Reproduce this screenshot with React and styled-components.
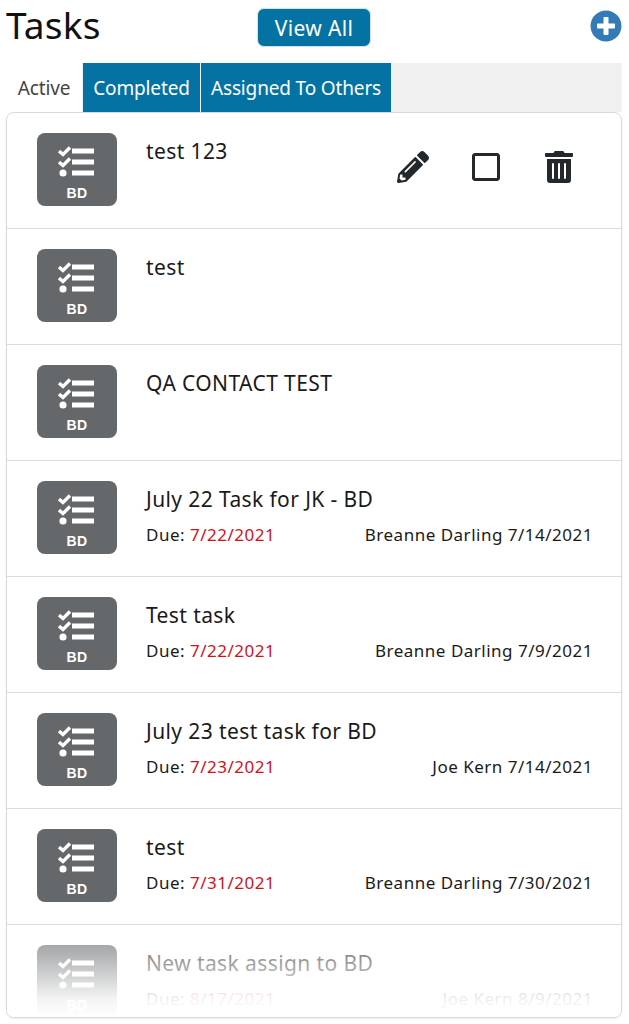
import React from "react";
import styled, { createGlobalStyle } from "styled-components";
import { FaPencilAlt, FaRegSquare, FaTrashAlt, FaPlusCircle } from "react-icons/fa";

const GlobalStyle = createGlobalStyle`
  html, body {
    margin: 0;
    padding: 0;
    background: #fff;
    font-family: "Noto Sans", "Open Sans", sans-serif;
    color: #1a1a1a;
  }
  * { box-sizing: border-box; }
`;

const Page = styled.div`
  width: 629px;
  height: 1024px;
  overflow: hidden;
  padding: 0 7px 0 6px;
`;

const Header = styled.div`
  height: 63px;
  display: grid;
  grid-template-columns: 251px 114px 1fr;
  align-items: start;
`;

const Title = styled.h1`
  margin: 1px 0 0;
  font-size: 37px;
  font-weight: 400;
  line-height: 48px;
  letter-spacing: 0.2px;
  color: #111;
`;

const ViewAll = styled.button`
  margin-top: 8px;
  height: 39px;
  width: 114px;
  border: 1px solid #cfe3ec;
  border-radius: 7px;
  background: #0473a3;
  color: #fff;
  font: 400 21px "Noto Sans", sans-serif;
  letter-spacing: 0.35px;
  padding: 0;
`;

const AddIcon = styled(FaPlusCircle)`
  justify-self: end;
  margin-top: 10px;
  font-size: 32px;
  color: #337ab7;
`;

const Tabs = styled.div`
  display: flex;
  height: 49px;
  background: #f0f0f0;
`;

const Tab = styled.div`
  display: flex;
  align-items: center;
  justify-content: center;
  width: ${(p) => p.$w}px;
  font-size: 19px;
  letter-spacing: -0.15px;
  margin-right: 1px;
  background: ${(p) => (p.$active ? "#fff" : "#0473a3")};
  color: ${(p) => (p.$active ? "#444" : "#fff")};
`;

const Card = styled.div`
  position: relative;
  height: 906px;
  border: 1px solid #d9d9d9;
  border-radius: 8px;
  box-shadow: 0 1px 2px rgba(0, 0, 0, 0.08);
  overflow: hidden;
`;

const Row = styled.div`
  height: 116px;
  padding: 20px 28px 0 30px;
  display: grid;
  grid-template-columns: 80px 1fr;
  column-gap: 29px;
  border-bottom: 1px solid #dcdcdc;
`;

const Badge = styled.div`
  width: 80px;
  height: 73px;
  border-radius: 8px;
  background: #65686b;
  display: flex;
  flex-direction: column;
  align-items: center;
  padding-top: 13px;
  color: #fff;
`;

const ChecklistSvg = styled.svg`
  flex: none;
  margin-right: 2px;
`;

const Initials = styled.div`
  margin-top: 7px;
  font: 700 14px/18px "Liberation Sans", Arial, sans-serif;
  letter-spacing: 0.3px;
`;

const Body = styled.div`
  min-width: 0;
  position: relative;
`;

const Name = styled.div`
  margin-top: 3px;
  font-size: 21px;
  line-height: 30px;
  letter-spacing: 0.4px;
  color: #1a1a1a;
`;

const Meta = styled.div`
  margin-top: 9px;
  display: flex;
  justify-content: space-between;
  font-size: 17px;
  line-height: 24px;
  letter-spacing: 0.5px;
  color: #1a1a1a;
`;

const DueDate = styled.span`
  color: #d0121b;
`;

const Actions = styled.div`
  position: absolute;
  top: 18px;
  right: 18px;
  display: flex;
  gap: 41px;
  align-items: center;
  font-size: 32px;
  color: #23282d;
`;

const Fade = styled.div`
  position: absolute;
  left: 0;
  right: 0;
  bottom: 0;
  height: 88px;
  background: linear-gradient(
    rgba(255, 255, 255, 0.3),
    rgba(255, 255, 255, 0.5) 30%,
    rgba(255, 255, 255, 0.93) 80%,
    #fff
  );
  pointer-events: none;
`;

const ChecklistIcon = () => (
  <ChecklistSvg width="36" height="31" viewBox="0 0 36 31" fill="none" stroke="#fff">
    <path d="M1 5l4 3.5 7-7" strokeWidth="3.4" />
    <path d="M1 16l4 3.5 7-7" strokeWidth="3.4" />
    <circle cx="5" cy="27" r="3.6" fill="#fff" stroke="none" />
    <path d="M14 5h22M14 16h22M14 27h22" strokeWidth="5" />
  </ChecklistSvg>
);

const tasks = [
  { name: "test 123", actions: true },
  { name: "test" },
  { name: "QA CONTACT TEST" },
  { name: "July 22 Task for JK - BD", due: "7/22/2021", by: "Breanne Darling 7/14/2021" },
  { name: "Test task", due: "7/22/2021", by: "Breanne Darling 7/9/2021" },
  { name: "July 23 test task for BD", due: "7/23/2021", by: "Joe Kern 7/14/2021" },
  { name: "test", due: "7/31/2021", by: "Breanne Darling 7/30/2021" },
  { name: "New task assign to BD", due: "8/17/2021", by: "Joe Kern 8/9/2021" },
];

export default function App() {
  return (
    <Page>
      <GlobalStyle />
      <Header>
        <Title>Tasks</Title>
        <ViewAll>View All</ViewAll>
        <AddIcon />
      </Header>
      <Tabs>
        <Tab $active $w={76}>Active</Tab>
        <Tab $w={117}>Completed</Tab>
        <Tab $w={190}>Assigned To Others</Tab>
      </Tabs>
      <Card>
        {tasks.map((t, i) => (
          <Row key={i}>
            <Badge>
              <ChecklistIcon />
              <Initials>BD</Initials>
            </Badge>
            <Body>
              <Name>{t.name}</Name>
              {t.due && (
                <Meta>
                  <span>
                    Due: <DueDate>{t.due}</DueDate>
                  </span>
                  <span>{t.by}</span>
                </Meta>
              )}
              {t.actions && (
                <Actions>
                  <FaPencilAlt />
                  <FaRegSquare />
                  <FaTrashAlt />
                </Actions>
              )}
            </Body>
          </Row>
        ))}
        <Fade />
      </Card>
    </Page>
  );
}
